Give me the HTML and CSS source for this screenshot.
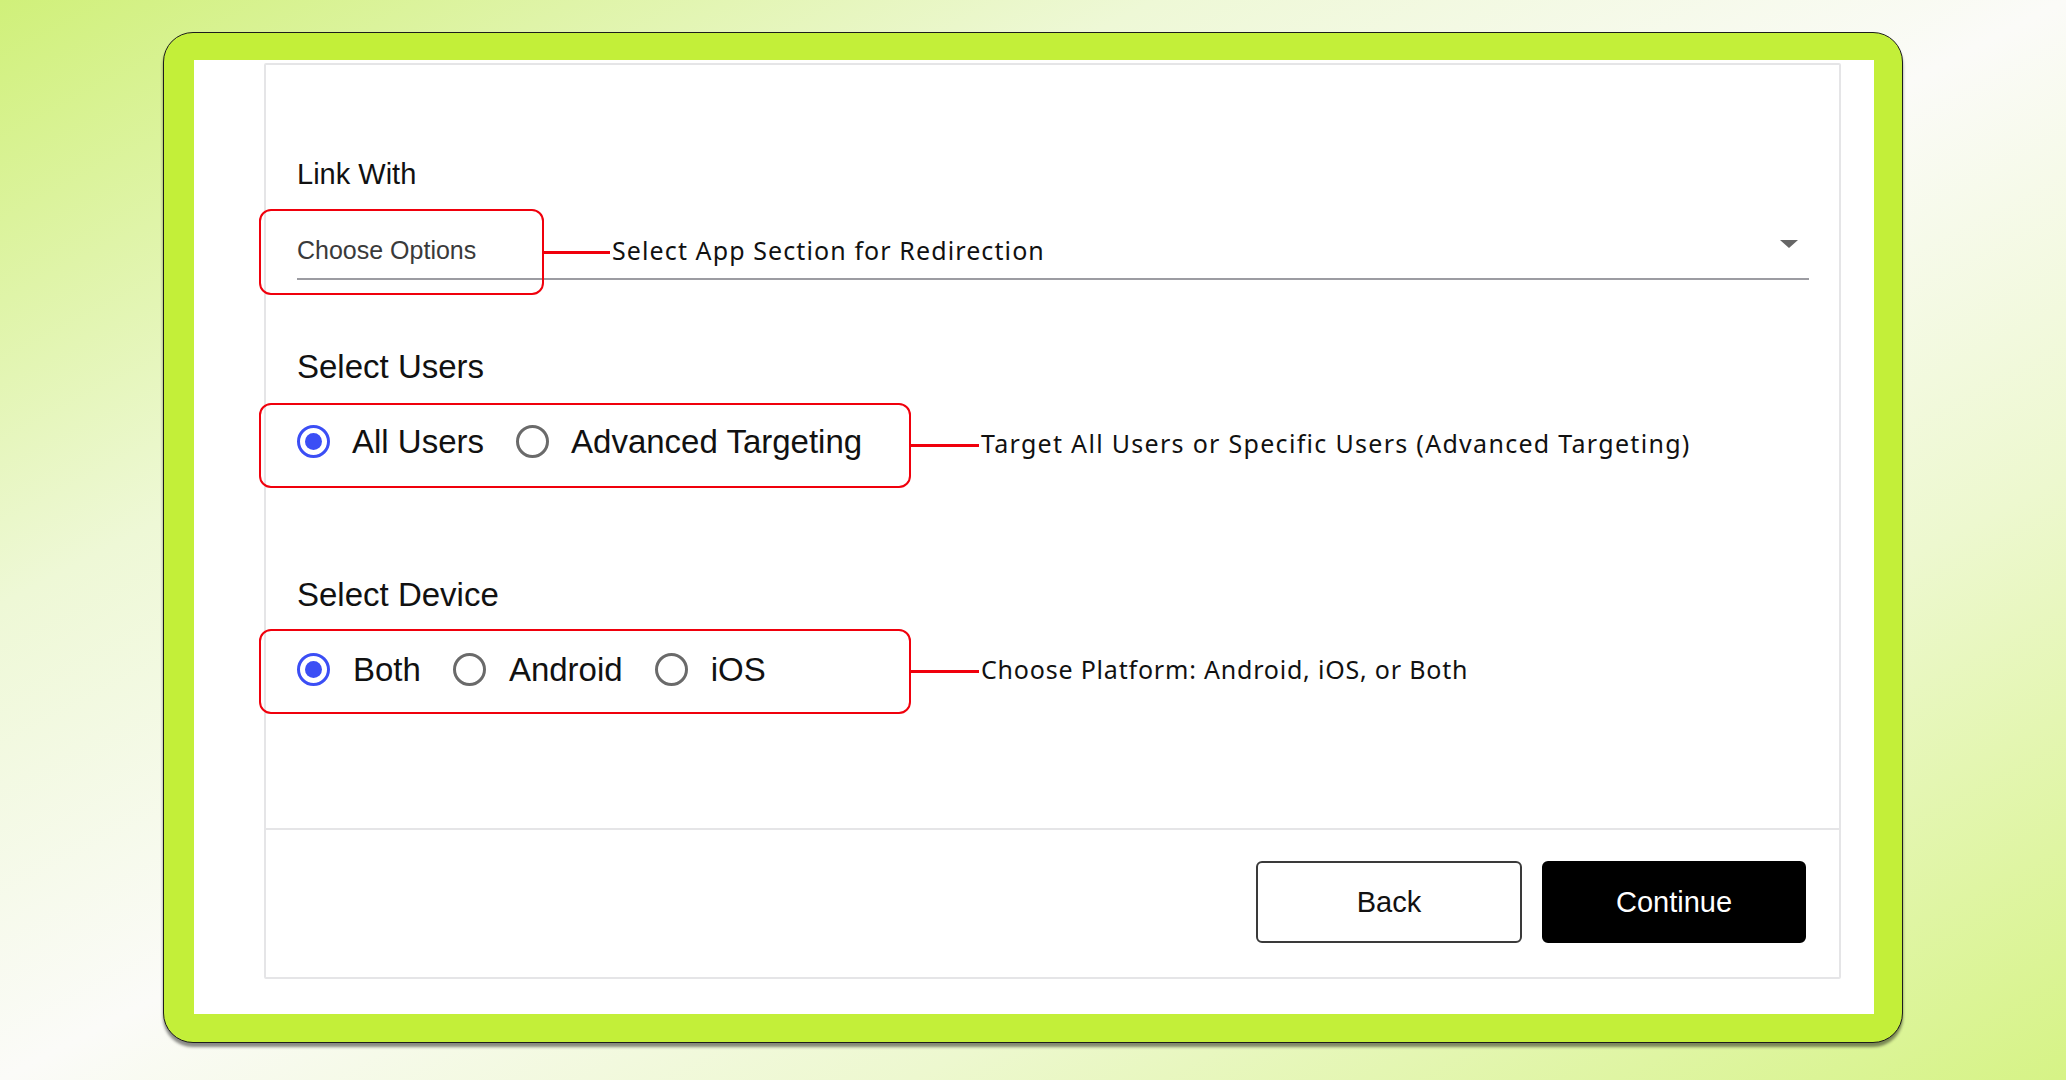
FILE: index.html
```html
<!DOCTYPE html>
<html lang="en">
<head>
<meta charset="utf-8">
<title>Link With</title>
<link rel="stylesheet" href="styles.css">
</head>
<body>
<div class="frame">
  <div class="screen">
    <div class="card">
      <div class="card-body">
        <div class="label label-link">Link With</div>
        <div class="select">
          <span class="placeholder">Choose Options</span>
          <span class="caret"></span>
          <div class="callout callout-select">
            <div class="callout-box"></div>
            <div class="connector"></div>
            <span class="note">Select App Section for Redirection</span>
          </div>
        </div>

        <div class="label label-users">Select Users</div>
        <div class="row row-users">
          <div class="radio-box">
            <span class="radio checked"></span><span class="radio-label">All Users</span>
            <span class="radio"></span><span class="radio-label">Advanced Targeting</span>
          </div>
          <div class="connector"></div>
          <span class="note note-wide">Target All Users or Specific Users (Advanced Targeting)</span>
        </div>

        <div class="label label-device">Select Device</div>
        <div class="row row-device">
          <div class="radio-box">
            <span class="radio checked"></span><span class="radio-label">Both</span>
            <span class="radio"></span><span class="radio-label">Android</span>
            <span class="radio"></span><span class="radio-label">iOS</span>
          </div>
          <div class="connector"></div>
          <span class="note note-narrow">Choose Platform: Android, iOS, or Both</span>
        </div>
      </div>
      <div class="card-footer">
        <button class="btn btn-back">Back</button>
        <button class="btn btn-continue">Continue</button>
      </div>
    </div>
  </div>
</div>
</body>
</html>
```

FILE: styles.css
```css
* { box-sizing: border-box; }
html, body { margin: 0; padding: 0; }
body {
  width: 2066px;
  height: 1080px;
  overflow: hidden;
  background: linear-gradient(to bottom right, #d0f07a 0%, #eef8d6 28%, #fbfbf8 50%, #edf8cf 72%, #d6f386 100%);
  font-family: "Liberation Sans", Arial, sans-serif;
}
.frame {
  margin: 32px 0 0 163px;
  width: 1740px;
  height: 1011px;
  background: #c3ef39;
  border: 1px solid #1c1c1c;
  border-radius: 30px;
  padding: 27px 28px 28px 30px;
  box-shadow: 0 4px 3px rgba(0, 0, 0, 0.45);
}
.screen {
  width: 100%;
  height: 100%;
  background: #ffffff;
  padding: 3px 33px 35px 70px;
}
.card {
  height: 100%;
  border: 2px solid #e5e5e7;
  border-radius: 2px;
  display: flex;
  flex-direction: column;
}
.card-body {
  flex: 1;
  padding: 0 30px 0 31px;
}
.label {
  color: #111;
  line-height: 34px;
}
.label-link {
  font-size: 29px;
  margin-top: 92px;
}
.label-users {
  font-size: 33px;
  line-height: 38px;
  margin-top: 68px;
}
.label-device {
  font-size: 33px;
  line-height: 38px;
  margin-top: 88px;
}
.select {
  position: relative;
  margin-top: 37px;
  height: 52px;
  padding-bottom: 6px;
  border-bottom: 2px solid #9c9ca2;
  display: flex;
  align-items: center;
  justify-content: space-between;
}
.placeholder {
  font-size: 25px;
  color: #3a3a3a;
}
.caret {
  width: 0;
  height: 0;
  border-left: 9px solid transparent;
  border-right: 9px solid transparent;
  border-top: 8px solid #666;
  margin-right: 11px;
  margin-top: -12px;
}
.callout {
  position: absolute;
  left: -38px;
  top: -19px;
  display: flex;
  align-items: center;
}
.callout-box {
  width: 285px;
  height: 86px;
  border: 2px solid #f0000c;
  border-radius: 12px;
}
.callout-select .note { margin-top: -5px; }
.connector {
  width: 66px;
  height: 3px;
  background: #f0000c;
}
.note {
  font-family: "Noto Sans", "Open Sans", sans-serif;
  font-size: 25px;
  letter-spacing: 1.1px;
  color: #111;
  margin-left: 2px;
  white-space: nowrap;
}
.note-wide { letter-spacing: 1.3px; }
.note-narrow { letter-spacing: 0.8px; }
.row {
  display: flex;
  align-items: center;
  margin-left: -38px;
}
.row .note { margin-top: -6px; }
.label-users + .row { margin-top: 17px; }
.label-device + .row { margin-top: 15px; }
.radio-box {
  width: 652px;
  height: 85px;
  border: 2px solid #f0000c;
  border-radius: 12px;
  padding-left: 36px;
  padding-bottom: 8px;
  display: flex;
  align-items: center;
}
.row-device .radio-box { padding-bottom: 4px; }
.row .connector { width: 68px; }
.radio {
  width: 33px;
  height: 33px;
  border-radius: 50%;
  border: 3px solid #6a6a6a;
  flex: none;
  margin-left: 32px;
  position: relative;
}
.row-device .radio { margin-left: 32px; }
.radio:first-child { margin-left: 0; }
.radio.checked {
  border-color: #3b4ef5;
}
.radio.checked::after {
  content: "";
  position: absolute;
  left: 5px;
  top: 5px;
  width: 17px;
  height: 17px;
  border-radius: 50%;
  background: #3b4ef5;
}
.radio-label {
  font-size: 33px;
  color: #111;
  margin-left: 22px;
}
.row-device .radio-label { margin-left: 23px; }
.card-footer {
  height: 149px;
  border-top: 2px solid #e5e5e7;
  display: flex;
  justify-content: flex-end;
  align-items: flex-start;
  padding: 31px 33px 0 0;
  gap: 20px;
}
.btn {
  width: 266px;
  height: 82px;
  font-family: "Liberation Sans", Arial, sans-serif;
  font-size: 29px;
  border-radius: 6px;
  cursor: pointer;
}
.btn-back {
  background: #fff;
  color: #111;
  border: 2px solid #3a3a3a;
}
.btn-continue {
  width: 264px;
  background: #000;
  color: #fff;
  border: 2px solid #000;
}
```
